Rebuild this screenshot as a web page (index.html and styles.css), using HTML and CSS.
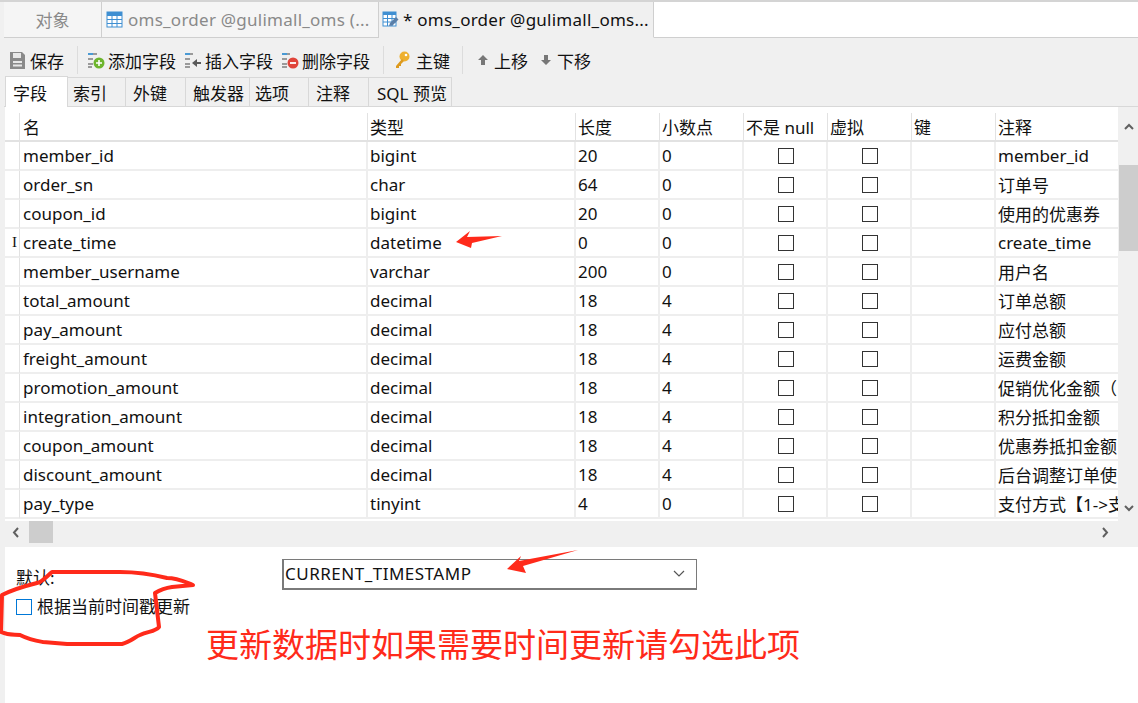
FILE: index.html
```html
<!DOCTYPE html>
<html lang="zh">
<head>
<meta charset="utf-8">
<title>oms_order</title>
<link rel="stylesheet" href="styles.css">
</head>
<body>
<div class="app">
  <div class="doc-tabs">
    <div class="doc-tab first">对象</div>
    <div class="doc-tab second">
      <svg class="tab-icon" width="17" height="17" viewBox="0 0 17 17"><rect x="1" y="1" width="15" height="15" fill="#fff" stroke="#3f8fd2"/><path d="M1 1h15v4H1z" fill="#3f8fd2"/><path d="M1 8.500h15M1 12.500h15M6 5v11M11 5v11" stroke="#3f8fd2"/></svg>
      <span class="tab-title">oms_order @gulimall_oms (...</span>
    </div>
    <div class="doc-tab active">
      <svg class="tab-icon" width="17" height="18" viewBox="0 0 17 18"><rect x="1" y="1" width="13" height="14" fill="#fff" stroke="#3f8fd2"/><path d="M1 1h13v3H1z" fill="#3f8fd2"/><path d="M1 7.500h13M1 11h13M5.500 4v11M10 4v11" stroke="#3f8fd2"/><path d="M7 15l1-3 6-6 2.500 2.500-6 6z" fill="#5a7fa8"/></svg>
      <span class="tab-title">* oms_order @gulimall_oms...</span>
    </div>
    <div class="doc-rest"></div>
  </div>

  <div class="toolbar">
    <div class="tool save">
      <svg width="15" height="17" viewBox="0 0 15 17"><path d="M0 0h12l3 3v14H0z" fill="#8a8a8a"/><rect x="3" y="1" width="8" height="5" fill="#e8e8e8"/><rect x="3" y="9" width="9" height="2" fill="#e8e8e8"/><rect x="3" y="12.500" width="9" height="2" fill="#e8e8e8"/></svg>
      <span>保存</span>
    </div>
    <div class="sep s1"></div>
    <div class="tool field">
      <svg width="17" height="17" viewBox="0 0 17 17"><path d="M0 2h9M0 7h5M0 12h5M0 15h4" stroke="#9a9a9a" stroke-width="2"/><path d="M0 2h5" stroke="#4a9ad4" stroke-width="2"/><circle cx="11" cy="11" r="5.500" fill="#6db52d"/><path d="M8 11h6M11 8v6" stroke="#fff" stroke-width="1.600"/></svg>
      <span>添加字段</span>
    </div>
    <div class="tool field">
      <svg width="17" height="17" viewBox="0 0 17 17"><path d="M0 2h8M0 7h5M0 12h5M0 15h5" stroke="#9a9a9a" stroke-width="2"/><path d="M0 2h5" stroke="#4a9ad4" stroke-width="2"/><path d="M7 11l5-4v3h4v2h-4v3z" fill="#5a5a5a"/></svg>
      <span>插入字段</span>
    </div>
    <div class="tool field">
      <svg width="17" height="17" viewBox="0 0 17 17"><path d="M0 2h8M0 7h5M0 12h5M0 15h5" stroke="#9a9a9a" stroke-width="2"/><path d="M0 2h5" stroke="#4a9ad4" stroke-width="2"/><circle cx="11" cy="11" r="5.500" fill="#e0443a"/><path d="M8 11h6" stroke="#fff" stroke-width="1.800"/></svg>
      <span>删除字段</span>
    </div>
    <div class="sep s2"></div>
    <div class="tool key">
      <svg width="15" height="18" viewBox="0 0 15 18"><circle cx="9.500" cy="5.500" r="5" fill="#eeb02f"/><circle cx="11" cy="4" r="1.300" fill="#fff"/><path d="M7 8l-6 7v2h3v-2h2v-2l3-3z" fill="#dd9a1e"/></svg>
      <span>主键</span>
    </div>
    <div class="sep s3"></div>
    <div class="tool move">
      <svg width="12" height="12" viewBox="0 0 12 12"><path d="M6 1l5 5H8v5H4V6H1z" fill="#777"/></svg>
      <span>上移</span>
    </div>
    <div class="tool move">
      <svg width="12" height="12" viewBox="0 0 12 12"><path d="M6 11l5-5H8V1H4v5H1z" fill="#777"/></svg>
      <span>下移</span>
    </div>
  </div>

  <div class="sub-tabs">
    <div class="sub-tab on">字段</div>
    <div class="sub-tab t-index">索引</div>
    <div class="sub-tab t-fk">外键</div>
    <div class="sub-tab t-trig">触发器</div>
    <div class="sub-tab t-opt">选项</div>
    <div class="sub-tab t-note">注释</div>
    <div class="sub-tab t-sql">SQL 预览</div>
  </div>

  <div class="grid-area">
    <div class="grid-wrap">
      <div class="grid" id="grid">
        <div class="h gut"></div><div class="h">名</div><div class="h">类型</div><div class="h">长度</div><div class="h">小数点</div><div class="h">不是 null</div><div class="h">虚拟</div><div class="h">键</div><div class="h last">注释</div>

        <div class="c gut"></div><div class="c">member_id</div><div class="c">bigint</div><div class="c">20</div><div class="c">0</div><div class="c chk"><i></i></div><div class="c chk"><i></i></div><div class="c"></div><div class="c last">member_id</div>
        <div class="c gut"></div><div class="c">order_sn</div><div class="c">char</div><div class="c">64</div><div class="c">0</div><div class="c chk"><i></i></div><div class="c chk"><i></i></div><div class="c"></div><div class="c last">订单号</div>
        <div class="c gut"></div><div class="c">coupon_id</div><div class="c">bigint</div><div class="c">20</div><div class="c">0</div><div class="c chk"><i></i></div><div class="c chk"><i></i></div><div class="c"></div><div class="c last">使用的优惠券</div>
        <div class="c gut cursor">I</div><div class="c">create_time</div><div class="c">datetime</div><div class="c">0</div><div class="c">0</div><div class="c chk"><i></i></div><div class="c chk"><i></i></div><div class="c"></div><div class="c last">create_time</div>
        <div class="c gut"></div><div class="c">member_username</div><div class="c">varchar</div><div class="c">200</div><div class="c">0</div><div class="c chk"><i></i></div><div class="c chk"><i></i></div><div class="c"></div><div class="c last">用户名</div>
        <div class="c gut"></div><div class="c">total_amount</div><div class="c">decimal</div><div class="c">18</div><div class="c">4</div><div class="c chk"><i></i></div><div class="c chk"><i></i></div><div class="c"></div><div class="c last">订单总额</div>
        <div class="c gut"></div><div class="c">pay_amount</div><div class="c">decimal</div><div class="c">18</div><div class="c">4</div><div class="c chk"><i></i></div><div class="c chk"><i></i></div><div class="c"></div><div class="c last">应付总额</div>
        <div class="c gut"></div><div class="c">freight_amount</div><div class="c">decimal</div><div class="c">18</div><div class="c">4</div><div class="c chk"><i></i></div><div class="c chk"><i></i></div><div class="c"></div><div class="c last">运费金额</div>
        <div class="c gut"></div><div class="c">promotion_amount</div><div class="c">decimal</div><div class="c">18</div><div class="c">4</div><div class="c chk"><i></i></div><div class="c chk"><i></i></div><div class="c"></div><div class="c last">促销优化金额（</div>
        <div class="c gut"></div><div class="c">integration_amount</div><div class="c">decimal</div><div class="c">18</div><div class="c">4</div><div class="c chk"><i></i></div><div class="c chk"><i></i></div><div class="c"></div><div class="c last">积分抵扣金额</div>
        <div class="c gut"></div><div class="c">coupon_amount</div><div class="c">decimal</div><div class="c">18</div><div class="c">4</div><div class="c chk"><i></i></div><div class="c chk"><i></i></div><div class="c"></div><div class="c last">优惠券抵扣金额</div>
        <div class="c gut"></div><div class="c">discount_amount</div><div class="c">decimal</div><div class="c">18</div><div class="c">4</div><div class="c chk"><i></i></div><div class="c chk"><i></i></div><div class="c"></div><div class="c last">后台调整订单使</div>
        <div class="c gut"></div><div class="c">pay_type</div><div class="c">tinyint</div><div class="c">4</div><div class="c">0</div><div class="c chk"><i></i></div><div class="c chk"><i></i></div><div class="c"></div><div class="c last">支付方式【1-&gt;支</div>
      </div>
      <div class="vscroll">
        <svg width="20" height="24" viewBox="0 0 20 24"><path d="M6 15l4-4 4 4" fill="none" stroke="#606060" stroke-width="2"/></svg>
        <div class="vtrack"><div class="vthumb"></div></div>
        <svg width="20" height="24" viewBox="0 0 20 24"><path d="M6 9l4 4 4-4" fill="none" stroke="#606060" stroke-width="2"/></svg>
      </div>
    </div>
    <div class="hscroll">
      <svg width="24" height="22" viewBox="0 0 24 22"><path d="M13 7l-4 4.500 4 4.500" fill="none" stroke="#606060" stroke-width="2"/></svg>
      <div class="hthumb"></div>
      <svg class="hright" width="20" height="22" viewBox="0 0 20 22"><path d="M8 7l4 4.500-4 4.500" fill="none" stroke="#606060" stroke-width="2"/></svg>
    </div>
  </div>

  <div class="props">
    <div class="prop-row">
      <label class="prop-label">默认:</label>
      <div class="combo">
        <span class="combo-text">CURRENT_TIMESTAMP</span>
        <svg width="12" height="7" viewBox="0 0 12 7"><path d="M1 1l5 5 5-5" fill="none" stroke="#555" stroke-width="1.200"/></svg>
      </div>
    </div>
    <div class="check-row"><span class="box"></span><span class="check-text">根据当前时间戳更新</span></div>
  </div>
</div>

<svg class="ink" width="1138" height="703" viewBox="0 0 1138 703">
  <polygon points="456,242 470,231 467,237 502,236 472,243 471,248" fill="#ff2a1a"/>
  <polygon points="507,569 521,556 519,561 578,550 523,566 526,573" fill="#ff2a1a"/>
  <path d="M193 585C185 582 178 578 167 578C155 575 140 572 120 572L52 572C45 578 42 582 37 583C25 586 12 590 2 595L1 632C10 636 15 634 20 635C30 640 37 641 43 642L67 644L122 644C130 642 135 637 140 635C148 631 155 632 159 627L155 593C160 590 165 588 172 587z" fill="none" stroke="#ff2a1a" stroke-width="4" stroke-linejoin="round"/>
</svg>
<div class="note">更新数据时如果需要时间更新请勾选此项</div>
</body>
</html>
```

FILE: styles.css
```css
* { box-sizing: border-box; }
html, body { margin: 0; padding: 0; }
body {
  width: 1138px;
  height: 703px;
  overflow: hidden;
  background: #f0f0f0;
  font-family: "Noto Sans", "Noto Sans CJK SC", sans-serif;
  font-size: 17px;
  color: #111;
  position: relative;
}
.app { display: flex; flex-direction: column; height: 703px; padding-left: 4px; }

.doc-tabs { display: flex; height: 38px; border-top: 2px solid #d4d4d4; flex: none; margin-left: -4px; padding-left: 4px; }
.doc-tab { display: flex; align-items: center; gap: 5px; height: 36px; border-bottom: 1px solid #cfcfcf; border-right: 1px solid #cfcfcf; background: #f5f5f5; color: #8a8a8a; white-space: nowrap; }
.doc-tab.first { width: 98px; justify-content: center; }
.doc-tab.second { width: 277px; padding-left: 4px; }
.doc-tab.active { width: 275px; padding-left: 3px; gap: 4px; background: #f0f0f0; color: #111; border-bottom-color: #f0f0f0; }
.doc-rest { flex: 1; background: #fff; border-bottom: 1px solid #cfcfcf; }
.tab-icon { flex: none; }
.tab-title { letter-spacing: 0.25px; }

.toolbar { display: flex; align-items: center; height: 38px; flex: none; padding-left: 6px; padding-top: 6px; }
.tool { display: flex; align-items: center; gap: 3px; white-space: nowrap; }
.tool.save { gap: 5px; }
.tool.field + .tool.field { margin-left: 9px; }
.tool.key { gap: 6px; }
.tool.move { gap: 5px; }
.tool.move + .tool.move { margin-left: 12px; }
.sep { width: 1px; height: 28px; background: #dcdcdc; }
.s1 { margin: 0 10px 0 13px; }
.s2 { margin: 0 11px 0 13px; }
.s3 { margin: 0 14px 0 12px; }

.sub-tabs { display: flex; align-items: flex-end; height: 30px; flex: none; border-bottom: 1px solid #d8d8d8; margin-top: 1px; padding-left: 1px; }
.sub-tab { height: 29px; border: 1px solid #d8d8d8; border-left: 0; border-bottom: 0; display: flex; align-items: center; background: #f0f0f0; white-space: nowrap; }
.sub-tab.on { width: 63px; height: 31px; background: #fff; border-left: 1px solid #d8d8d8; padding-left: 7px; margin-bottom: -1px; }
.t-index { width: 58px; padding-left: 5px; }
.t-fk { width: 60px; padding-left: 7px; }
.t-trig { width: 64px; padding-left: 7px; }
.t-opt { width: 59px; padding-left: 5px; }
.t-note { width: 60px; padding-left: 7px; }
.t-sql { width: 83px; padding-left: 8px; }

.grid-area { background: #fff; flex: none; margin-left: 1px; }
.grid-wrap { display: flex; height: 414px; background: #f0f0f0; }
.grid { display: grid; width: 1113px; flex: none; background: #fff; padding-top: 6px; grid-template-columns: 15px 348px 208px 84px 84px 84px 84px 84px 122px; grid-auto-rows: 29px; align-content: start; overflow: hidden; height: 414px; }
.h, .c { display: flex; align-items: center; padding-left: 2px; height: 29px; border-right: 2px solid #eeeeee; border-bottom: 2px solid #eeeeee; white-space: nowrap; overflow: hidden; }
.h { border-bottom-color: #e2e2e2; border-right-width: 1px; border-right-color: #e2e2e2; }
.h:nth-child(2), .c:nth-child(9n+2) { padding-left: 3px; }
.c.gut { border-right-width: 1px; border-right-color: #e2e2e2; }
.h.gut { border-bottom-color: #e2e2e2; }
.c.last, .h.last { border-right: 0; }
.cursor { font-family: "Liberation Serif", serif; font-size: 15px; padding-left: 7px; }
.chk { justify-content: center; padding: 0 0 0 2px; }
.chk i { display: block; width: 16px; height: 16px; border: 1px solid #333; background: #fff; }

.vscroll { width: 20px; margin-left: 1px; display: flex; flex-direction: column; margin-top: 7px; background: #f0f0f0; }
.vtrack { flex: 1; padding-top: 27px; }
.vthumb { width: 100%; height: 86px; background: #cdcdcd; }
.vscroll + * { flex: none; }

.hscroll { display: flex; align-items: flex-start; height: 26px; background: #f0f0f0; }
.hthumb { width: 24px; height: 22px; background: #cdcdcd; }
.hright { margin-left: auto; margin-right: 23px; }

.props { flex: 1; background: #fff; margin-left: 1px; padding: 12px 0 0 11px; }
.prop-row { display: flex; align-items: center; height: 31px; }
.prop-label { width: 266px; padding-top: 3px; }
.combo { width: 415px; height: 31px; border: 2px solid #7a7a7a; border-width: 1px 1px 2px 2px; display: flex; align-items: center; justify-content: space-between; padding: 0 11px 2px 1px; }
.combo-text { letter-spacing: 0.5px; }
.check-row { display: flex; align-items: flex-start; gap: 5px; margin-top: 9px; height: 18px; }
.check-text { line-height: 16px; }
.box { display: block; width: 16px; height: 16px; border: 1.500px solid #0078d7; }

.ink { position: absolute; left: 0; top: 0; pointer-events: none; }
.note { position: absolute; left: 206px; top: 621px; font-size: 33px; line-height: 48px; color: #ff2a1a; white-space: nowrap; }
```
